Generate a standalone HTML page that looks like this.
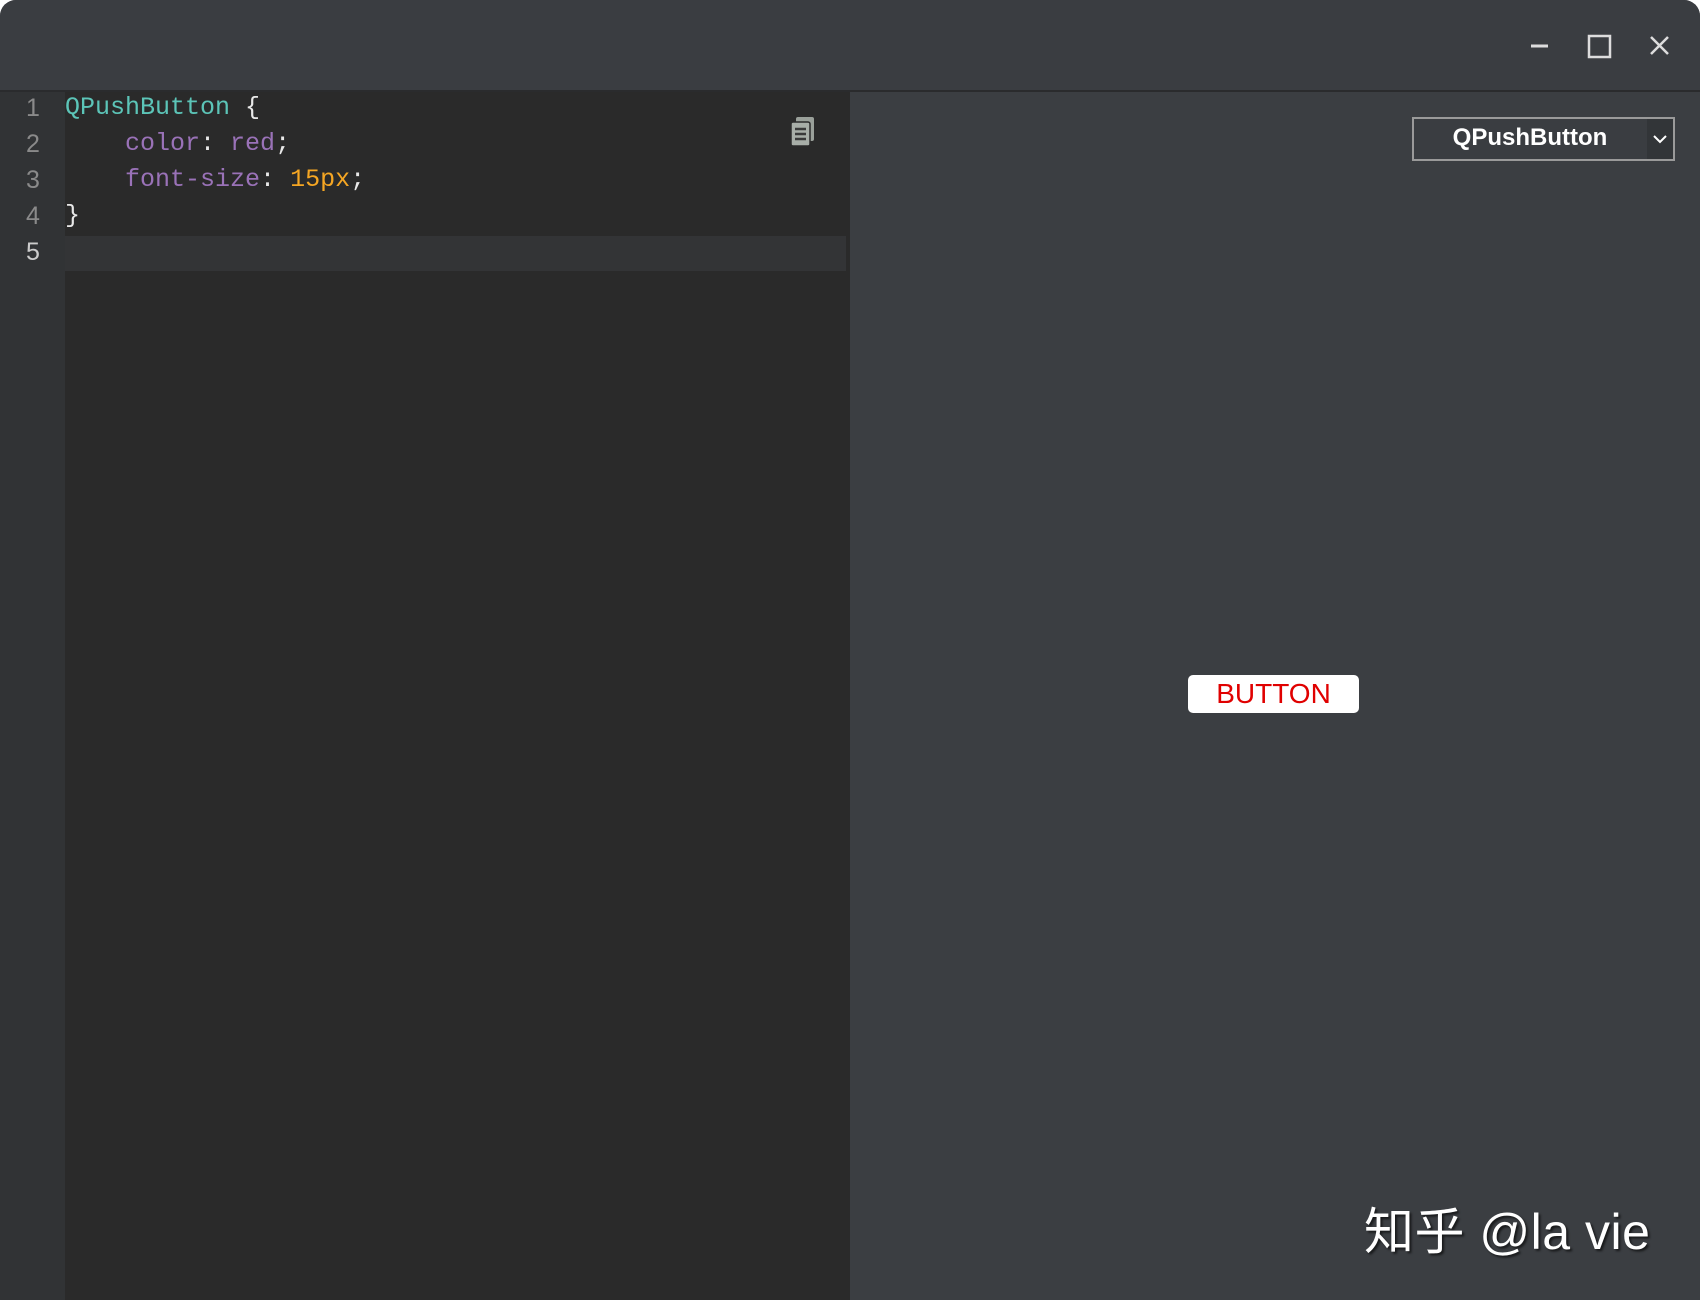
<!DOCTYPE html>
<html><head><meta charset="utf-8"><style>
html,body{margin:0;padding:0;width:1700px;height:1300px;overflow:hidden;background:#ffffff;}
.win{position:absolute;left:0;top:0;width:1700px;height:1300px;background:#3b3e42;border-radius:16px 16px 0 0;overflow:hidden;}
.title{position:absolute;left:0;top:0;width:1700px;height:90px;background:#3a3d41;border-bottom:2px solid #2a2b2d;}
.left{position:absolute;left:0;top:92px;width:850px;height:1208px;background:#2a2a2a;}
.gutter{position:absolute;left:0;top:0;width:65px;height:1208px;background:#313335;}
.code{position:absolute;left:0;top:0;font-family:"Liberation Mono",monospace;font-size:25px;line-height:36px;}
.ln{position:absolute;left:26px;width:30px;color:#8a8a8a;font-family:"Liberation Sans",sans-serif;font-size:25px;}
.tx{position:absolute;left:65px;white-space:pre;color:#e8e8e8;}
.hl{position:absolute;left:65px;top:144px;width:781px;height:35px;background:#333436;}
.t{color:#5cc5b8}.p{color:#9a72b8}.o{color:#f5a623}
.combo{position:absolute;left:1412px;top:117px;width:259px;height:40px;border:2px solid #9a9a9a;background:#3a3d41;}
.combo span{position:absolute;left:0;width:232px;text-align:center;top:5px;font:bold 24px "Liberation Sans",sans-serif;color:#fff;}
.dd{position:absolute;right:0;top:0;width:26px;height:40px;background:#323538;}
.btn{position:absolute;left:1188px;top:675px;width:171px;height:38px;background:#fff;border-radius:5px;text-align:center;font:28px/38px "Liberation Sans",sans-serif;color:#e00000;}
.wm{position:absolute;left:1364px;top:1192px;font:50px "Liberation Sans","Noto Sans CJK SC",sans-serif;color:#fff;text-shadow:2px 2px 2px rgba(0,0,0,.6);white-space:nowrap;letter-spacing:0.5px;}
</style></head><body>
<div class="win">
<div class="title">
<svg style="position:absolute;left:1520px;top:26px" width="160" height="40">
<line x1="11" y1="20" x2="28" y2="20" stroke="#ddd" stroke-width="3"/>
<rect x="69" y="10" width="21" height="21" fill="none" stroke="#ddd" stroke-width="2.5"/>
<path d="M131 11 L148 28 M148 11 L131 28" stroke="#ddd" stroke-width="2.5"/>
</svg>
</div>
<div class="left">
<div class="gutter"></div>
<div class="hl"></div>
<div class="code">
<div class="ln" style="top:-2px">1</div>
<div class="ln" style="top:34px">2</div>
<div class="ln" style="top:70px">3</div>
<div class="ln" style="top:106px">4</div>
<div class="ln" style="top:142px;color:#ccc">5</div>
<div class="tx" style="top:-2px"><span class="t">QPushButton</span> {</div>
<div class="tx" style="top:34px">    <span class="p">color</span>: <span class="p">red</span>;</div>
<div class="tx" style="top:70px">    <span class="p">font-size</span>: <span class="o">15px</span>;</div>
<div class="tx" style="top:106px">}</div>
</div>
<svg style="position:absolute;left:788px;top:23px" width="30" height="34">
<rect x="8" y="2" width="18" height="24" rx="2" fill="#9aa09a"/>
<rect x="3" y="7" width="19" height="24" rx="2" fill="#a8aea8" stroke="#2a2a2a" stroke-width="1.5"/>
<path d="M7 14h11M7 19h11M7 24h11" stroke="#3a3a3a" stroke-width="2.5"/>
</svg>
</div>
<div class="combo"><span>QPushButton</span><div class="dd"><svg width="26" height="40"><path d="M7 17 L13 23 L19 17" fill="none" stroke="#fff" stroke-width="2"/></svg></div></div>
<div class="btn">BUTTON</div>
<div class="wm">知乎 @la vie</div>
</div>
</body></html>
